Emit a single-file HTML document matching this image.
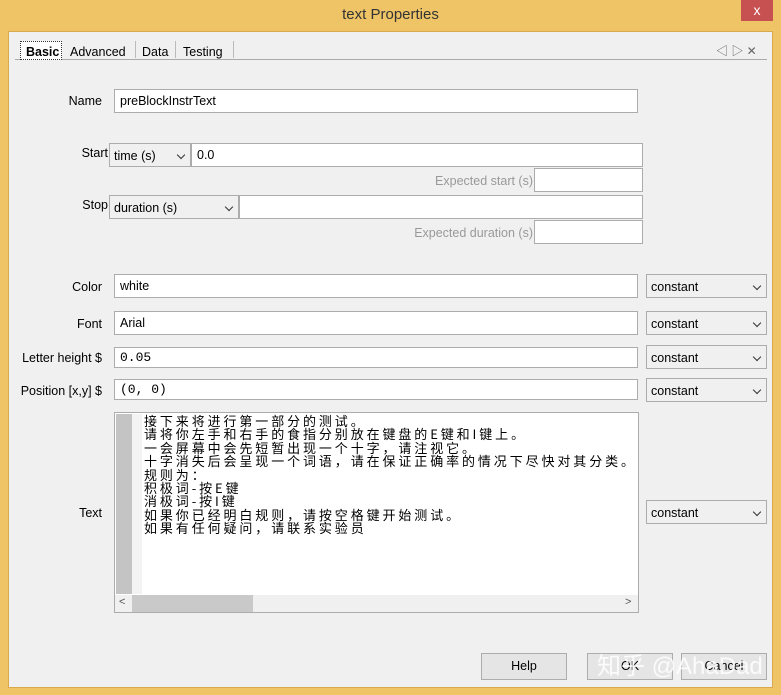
<!DOCTYPE html>
<html><head><meta charset="utf-8"><style>
*{box-sizing:border-box}
body{margin:0;width:781px;height:695px;background:#efc466;font-family:"Liberation Sans","Noto Sans CJK SC",sans-serif;font-size:12.5px;color:#000;position:relative;overflow:hidden}
.a{position:absolute}
.client{left:8px;top:31px;width:765px;height:657px;background:#f0f0f0;border:1px solid #d9a94a}
.in{position:absolute;background:#fff;border:1px solid #acacac;height:24px;padding:4px 5px;font-size:12.5px;white-space:nowrap}
.sel{position:absolute;background:#f0f0f0;border:1px solid #acacac;height:24px;padding:5px 4px;font-size:12.5px}
.sel:after{content:"";position:absolute;right:6px;top:8px;width:5px;height:5px;border-right:1.5px solid #333;border-bottom:1.5px solid #333;transform:rotate(45deg)}
.lbl{position:absolute;font-size:12.5px;text-align:right}
.btn{position:absolute;border:1px solid #adadad;background:#e5e5e5;height:27px;text-align:center;line-height:25px;font-size:12.5px}
</style></head><body>
<div class="a" style="left:0;top:6px;width:781px;text-align:center;font-size:15px;color:#333">text Properties</div>
<div class="a" style="left:741px;top:0;width:32px;height:21px;background:#c75050;color:#fff;text-align:center;font-size:14px;line-height:20px">x</div>
<div class="a client"></div>
<div class="a" style="left:15px;top:59px;width:752px;height:1px;background:#aaa"></div>
<div class="a" style="left:20px;top:41px;width:42px;height:19px;border:1px dotted #333;background:#fff;font-weight:bold;padding:3px 0 0 5px">Basic</div>
<div class="a" style="left:70px;top:45px">Advanced</div>
<div class="a" style="left:135px;top:41px;width:1px;height:17px;background:#bbb"></div>
<div class="a" style="left:142px;top:45px">Data</div>
<div class="a" style="left:175px;top:41px;width:1px;height:17px;background:#bbb"></div>
<div class="a" style="left:183px;top:45px">Testing</div>
<div class="a" style="left:233px;top:41px;width:1px;height:17px;background:#bbb"></div>
<div class="a" style="left:716px;top:42px;color:#666;font-size:12px">◁ ▷ ✕</div>

<div class="lbl" style="left:20px;width:82px;top:94px">Name</div>
<div class="in" style="left:114px;top:89px;width:524px">preBlockInstrText</div>

<div class="lbl" style="left:20px;width:88px;top:146px">Start</div>
<div class="sel" style="left:109px;top:143px;width:82px">time (s)</div>
<div class="in" style="left:191px;top:143px;width:452px">0.0</div>
<div class="lbl" style="left:300px;width:233px;top:174px;color:#999">Expected start (s)</div>
<div class="in" style="left:534px;top:168px;width:109px"></div>

<div class="lbl" style="left:20px;width:88px;top:198px">Stop</div>
<div class="sel" style="left:109px;top:195px;width:130px">duration (s)</div>
<div class="in" style="left:239px;top:195px;width:404px"></div>
<div class="lbl" style="left:300px;width:233px;top:226px;color:#999">Expected duration (s)</div>
<div class="in" style="left:534px;top:220px;width:109px"></div>

<div class="lbl" style="left:20px;width:82px;top:280px">Color</div>
<div class="in" style="left:114px;top:274px;width:524px">white</div>
<div class="sel" style="left:646px;top:274px;width:121px">constant</div>

<div class="lbl" style="left:20px;width:82px;top:317px">Font</div>
<div class="in" style="left:114px;top:311px;width:524px">Arial</div>
<div class="sel" style="left:646px;top:311px;width:121px">constant</div>

<div class="lbl" style="left:10px;width:92px;top:351px">Letter height $</div>
<div class="in" style="left:114px;top:347px;width:524px;height:21px;padding:2px 5px;font-family:'Liberation Mono',monospace;font-size:13px">0.05</div>
<div class="sel" style="left:646px;top:345px;width:121px">constant</div>

<div class="lbl" style="left:10px;width:92px;top:384px">Position [x,y] $</div>
<div class="in" style="left:114px;top:379px;width:524px;height:21px;padding:2px 5px;font-family:'Liberation Mono',monospace;font-size:13px">(0, 0)</div>
<div class="sel" style="left:646px;top:378px;width:121px">constant</div>

<div class="lbl" style="left:20px;width:82px;top:506px">Text</div>
<div class="a" style="left:114px;top:412px;width:525px;height:201px;background:#fff;border:1px solid #acacac"></div>
<div class="a" style="left:116px;top:414px;width:16px;height:180px;background:#c4c4c4"></div>
<div class="a" style="left:132px;top:414px;width:10px;height:180px;background:#f3f3f3"></div>
<div class="a" style="left:144px;top:414px;width:494px;overflow:hidden;font-family:'Noto Sans CJK SC',sans-serif;font-size:13px;letter-spacing:2.9px;line-height:13.4px;white-space:pre">接下来将进行第一部分的测试。
请将你左手和右手的食指分别放在键盘的E键和I键上。
一会屏幕中会先短暂出现一个十字，请注视它。
十字消失后会呈现一个词语，请在保证正确率的情况下尽快对其分类。
规则为：
积极词-按E键
消极词-按I键
如果你已经明白规则，请按空格键开始测试。
如果有任何疑问，请联系实验员</div>
<div class="a" style="left:115px;top:595px;width:523px;height:17px;background:#f0f0f0"></div>
<div class="a" style="left:132px;top:595px;width:121px;height:17px;background:#c9c9c9"></div>
<div class="a" style="left:119px;top:596px;font-size:11px;color:#555">&lt;</div>
<div class="a" style="left:625px;top:596px;font-size:11px;color:#555">&gt;</div>
<div class="sel" style="left:646px;top:500px;width:121px">constant</div>

<div class="btn" style="left:481px;top:653px;width:86px">Help</div>
<div class="btn" style="left:587px;top:653px;width:86px">OK</div>
<div class="btn" style="left:681px;top:653px;width:86px">Cancel</div>
<div class="a" style="left:597px;top:646px;font-size:24px;color:rgba(255,255,255,.85);font-family:'Liberation Sans','Noto Sans CJK SC',sans-serif">知乎 @AhaDad</div>
</body></html>
